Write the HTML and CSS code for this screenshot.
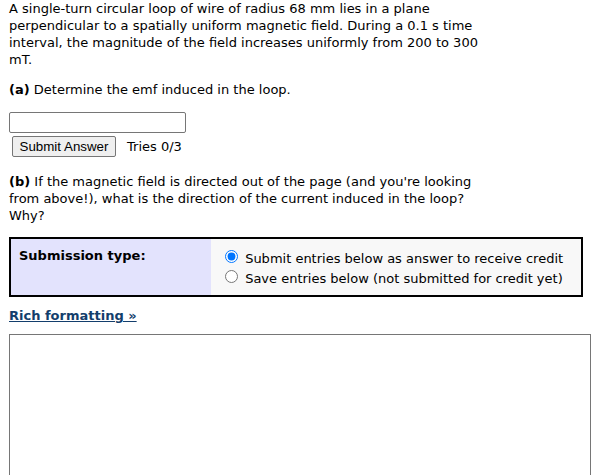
FILE: index.html
```html
<!DOCTYPE html>
<html>
<head>
<meta charset="utf-8">
<link rel="stylesheet" href="styles.css">
</head>
<body>
<div class="problem">
  <p class="text">A single-turn circular loop of wire of radius 68 mm lies in a plane perpendicular to a spatially uniform magnetic field. During a 0.1 s time interval, the magnitude of the field increases uniformly from 200 to 300 mT.</p>
  <p class="text part"><b>(a)</b> Determine the emf induced in the loop.</p>
  <div class="answer">
    <input class="answer-input" type="text">
    <div class="submit-row">
      <button class="submit-btn" type="button">Submit Answer</button>
      <span class="tries">Tries 0/3</span>
    </div>
  </div>
  <p class="text part-b"><b>(b)</b> If the magnetic field is directed out of the page (and you're looking from above!), what is the direction of the current induced in the loop? Why?</p>
  <div class="subtype">
    <div class="subtype-label">Submission type:</div>
    <div class="subtype-options">
      <label class="opt"><input type="radio" name="st" checked> Submit entries below as answer to receive credit</label>
      <label class="opt"><input type="radio" name="st"> Save entries below (not submitted for credit yet)</label>
    </div>
  </div>
  <a class="rich-link" href="#">Rich formatting »</a>
  <textarea class="essay"></textarea>
</div>
</body>
</html>
```

FILE: styles.css
```css
html, body {
  margin: 0;
  padding: 0;
  background: #fff;
}
body {
  font-family: "DejaVu Sans", Verdana, sans-serif;
  font-size: 13px;
  line-height: 17px;
  color: #000;
}
.problem {
  padding: 0 9px;
}
.text {
  margin: 0;
  width: 478px;
}
.part {
  margin-top: 13px;
}
.answer {
  margin-top: 14px;
  display: flex;
  flex-direction: column;
  align-items: flex-start;
  gap: 3px;
}
.answer-input {
  box-sizing: border-box;
  width: 177px;
  height: 21px;
  margin: 0;
  border: 1px solid #767676;
  border-radius: 2px;
  padding: 1px 2px;
  font-family: "Liberation Sans", Arial, sans-serif;
  font-size: 13px;
}
.submit-row {
  display: flex;
  align-items: center;
  margin-left: 3px;
}
.submit-btn {
  box-sizing: border-box;
  height: 21px;
  width: 104px;
  margin: 0;
  padding: 0 6px;
  border: 1px solid #767676;
  border-radius: 2px;
  background: #efefef;
  font-family: "Liberation Sans", Arial, sans-serif;
  font-size: 13.33px;
  color: #000;
}
.tries {
  margin-left: 11px;
}
.part-b {
  margin-top: 16px;
}
.subtype {
  box-sizing: border-box;
  width: 574px;
  margin-top: 13px;
  border: 2px solid #000;
  display: flex;
}
.subtype-label {
  width: 200px;
  box-sizing: border-box;
  padding: 8px;
  background: #e3e3fd;
  font-weight: bold;
}
.subtype-options {
  flex: 1;
  padding: 8px 9px;
  background: #f8f8f8;
  display: flex;
  flex-direction: column;
}
.opt {
  display: block;
  line-height: 17px;
}
.opt input {
  margin: 3px 3px 0 5px;
  vertical-align: baseline;
}
.rich-link {
  display: inline-block;
  margin-top: 10px;
  color: #133e6c;
  font-weight: bold;
  text-decoration: underline;
}
.essay {
  display: block;
  box-sizing: border-box;
  width: 582px;
  height: 170px;
  margin-top: 10px;
  border: 1px solid #767676;
  resize: none;
}
```
